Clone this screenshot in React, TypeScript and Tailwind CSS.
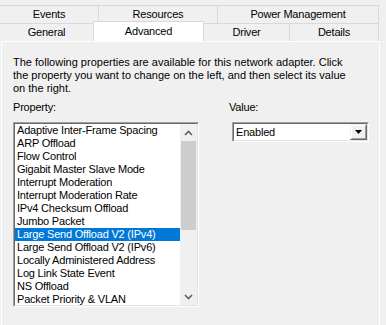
import React from "react";

const items = [
  "Adaptive Inter-Frame Spacing",
  "ARP Offload",
  "Flow Control",
  "Gigabit Master Slave Mode",
  "Interrupt Moderation",
  "Interrupt Moderation Rate",
  "IPv4 Checksum Offload",
  "Jumbo Packet",
  "Large Send Offload V2 (IPv4)",
  "Large Send Offload V2 (IPv6)",
  "Locally Administered Address",
  "Log Link State Event",
  "NS Offload",
  "Packet Priority & VLAN",
];

function Chevron({ up }: { up?: boolean }) {
  return (
    <svg width="9" height="6" viewBox="0 0 9 6">
      <path
        d={up ? "M1 5 L4.5 1.5 L8 5" : "M1 1 L4.5 4.5 L8 1"}
        fill="none"
        stroke="#606060"
        strokeWidth="1.6"
      />
    </svg>
  );
}

export default function App() {
  return (
    <div className="w-[386px] h-[325px] bg-[#f0f0f0] overflow-hidden text-black text-[11px] tracking-[-0.2px] font-['Liberation_Sans',Arial,sans-serif]">
      {/* Tabs */}
      <div className="pt-[5px]">
        <div className="flex h-[18px] w-[379px]">
          <div className="w-[99px] border-t border-r border-[#d9d9d9] flex items-center justify-center">Events</div>
          <div className="w-[119px] border-t border-r border-[#d9d9d9] flex items-center justify-center">Resources</div>
          <div className="w-[161px] border-t border-r border-[#d9d9d9] flex items-center justify-center">Power Management</div>
        </div>
        <div className="flex h-[18px] w-[379px] items-end">
          <div className="w-[93px] h-[18px] border-t border-[#d9d9d9] flex items-center justify-center">General</div>
          <div className="relative z-10 w-[111px] h-[20px] -mt-[2px] bg-white border-t border-l border-r border-[#d9d9d9] flex items-center justify-center">
            Advanced
          </div>
          <div className="w-[86px] h-[18px] border-t border-r border-[#d9d9d9] flex items-center justify-center">Driver</div>
          <div className="w-[89px] h-[18px] border-t border-r border-[#d9d9d9] flex items-center justify-center">Details</div>
        </div>
      </div>

      {/* Panel */}
      <div className="ml-[1px] w-[379px] h-[290px] border-t border-l border-r border-white pl-[11px]">
        <p className="mt-[14px] leading-[13px] whitespace-nowrap tracking-normal">
          The following properties are available for this network adapter. Click
          <br />
          the property you want to change on the left, and then select its value
          <br />
          on the right.
        </p>

        <div className="flex mt-[6px]">
          {/* Property column */}
          <div className="w-[186px]">
            <div className="leading-[13px] h-[13px]">Property:</div>
            <div className="mt-[8px] w-[186px] h-[185px] border border-t-[#a0a0a0] border-l-[#a0a0a0] border-b-white border-r-white">
              <div className="w-full h-full border border-t-[#696969] border-l-[#696969] border-b-[#e3e3e3] border-r-[#e3e3e3] bg-white flex overflow-hidden">
                <div className="w-[165px] shrink-0">
                  {items.map((it, i) => (
                    <div
                      key={it}
                      className={
                        i === 8
                          ? "h-[13px] leading-[13px] pl-[2px] whitespace-nowrap bg-[#0078d7] text-white"
                          : "h-[13px] leading-[13px] pl-[2px] whitespace-nowrap"
                      }
                    >
                      {it}
                    </div>
                  ))}
                </div>
                <div className="w-[17px] shrink-0 bg-[#f0f0f0] flex flex-col">
                  <div className="h-[17px] flex items-center justify-center">
                    <Chevron up />
                  </div>
                  <div className="h-[89px] mx-[1px] bg-[#cdcdcd]" />
                  <div className="flex-1" />
                  <div className="h-[17px] flex items-center justify-center">
                    <Chevron />
                  </div>
                </div>
              </div>
            </div>
          </div>

          {/* Value column */}
          <div className="ml-[30px]">
            <div className="leading-[13px] h-[13px]">Value:</div>
            <div className="mt-[8px] ml-[3px] w-[137px] h-[20px] border border-t-[#a0a0a0] border-l-[#a0a0a0] border-b-white border-r-white">
              <div className="w-full h-full border border-t-[#696969] border-l-[#696969] border-b-[#e3e3e3] border-r-[#e3e3e3] bg-white flex items-center justify-between">
                <span className="pl-[2px] leading-[13px]">Enabled</span>
                <div className="w-[17px] h-[16px] border border-t-[#f0f0f0] border-l-[#f0f0f0] border-b-[#696969] border-r-[#696969]">
                  <div className="w-full h-full border border-t-white border-l-white border-b-[#a0a0a0] border-r-[#a0a0a0] bg-[#f0f0f0] flex items-center justify-center">
                    <svg width="7" height="4" viewBox="0 0 7 4">
                      <path d="M0 0 H7 L3.5 4 Z" fill="#000" />
                    </svg>
                  </div>
                </div>
              </div>
            </div>
          </div>
        </div>
      </div>
    </div>
  );
}
